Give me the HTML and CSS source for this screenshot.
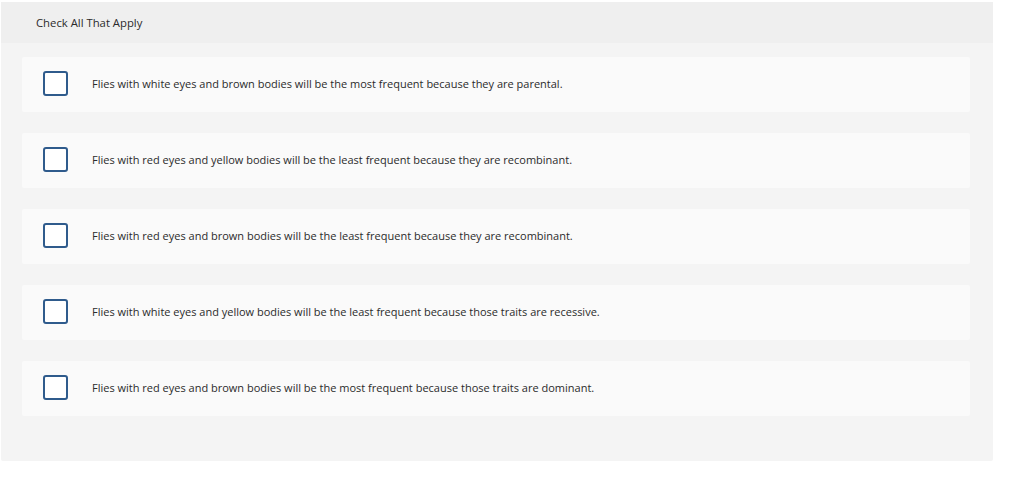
FILE: index.html
```html
<!DOCTYPE html>
<html lang="en">
<head>
    <meta charset="UTF-8">
    <title>Check All That Apply</title>
    <link rel="stylesheet" href="styles.css">
</head>
<body>
    <div class="panel">
        <div class="panel-header">Check All That Apply</div>
        <div class="options">
            <label class="option">
                <span class="box"></span>
                <span class="option-text">Flies with white eyes and brown bodies will be the most frequent because they are parental.</span>
            </label>
            <label class="option">
                <span class="box"></span>
                <span class="option-text">Flies with red eyes and yellow bodies will be the least frequent because they are recombinant.</span>
            </label>
            <label class="option">
                <span class="box"></span>
                <span class="option-text">Flies with red eyes and brown bodies will be the least frequent because they are recombinant.</span>
            </label>
            <label class="option">
                <span class="box"></span>
                <span class="option-text">Flies with white eyes and yellow bodies will be the least frequent because those traits are recessive.</span>
            </label>
            <label class="option">
                <span class="box"></span>
                <span class="option-text">Flies with red eyes and brown bodies will be the most frequent because those traits are dominant.</span>
            </label>
        </div>
    </div>
</body>
</html>
```

FILE: styles.css
```css
body {
    margin: 0;
    padding: 2px 0 0 1px;
    background: #fff;
    font-family: "Open Sans", "Liberation Sans", sans-serif;
    color: #333;
}

.panel {
    width: 992px;
    height: 459px;
    background: #f4f4f4;
    border-radius: 0 0 2px 2px;
}

.panel-header {
    height: 41px;
    box-sizing: border-box;
    padding: 13px 0 0 35px;
    background: #efefef;
    font-size: 11.3px;
    color: #2b2b2b;
}

.options {
    display: flex;
    flex-direction: column;
    gap: 21px;
    padding: 14px 23px 0 21px;
}

.option {
    display: flex;
    align-items: center;
    height: 55px;
    padding-left: 21px;
    padding-bottom: 2px;
    box-sizing: border-box;
    background: #fafafa;
    border-radius: 2px;
    cursor: pointer;
}

.box {
    width: 21px;
    height: 21px;
    border: 2px solid #2f5b8c;
    border-radius: 3px;
    background: #fff;
    flex-shrink: 0;
}

.option-text {
    margin-left: 24px;
    font-size: 11px;
    color: #2b2b2b;
}
```
